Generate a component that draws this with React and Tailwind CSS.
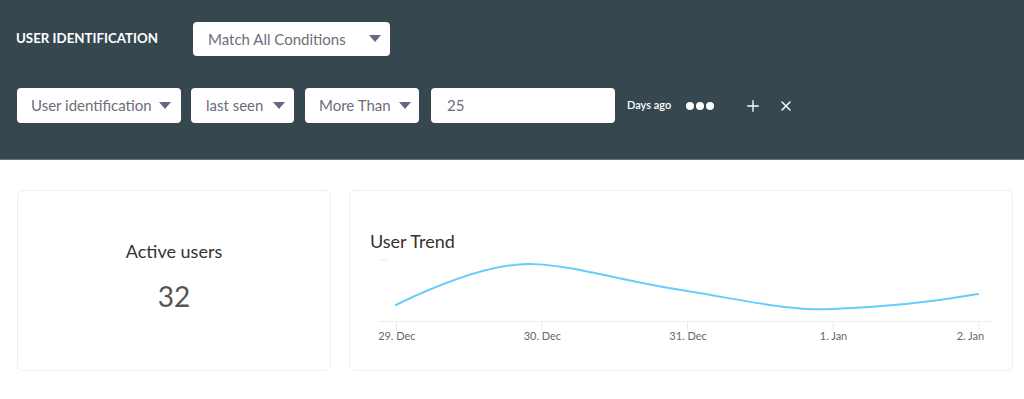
import React from "react";
import { Plus, X } from "lucide-react";

const Caret = () => (
  <svg width="12" height="8" viewBox="0 0 12 8" className="shrink-0">
    <path d="M0 0 L12 0 L6 7 Z" fill="#6c6481" />
  </svg>
);

const Select = ({ label, className, pad = "px-[14px]" }) => (
  <div
    className={`h-[35px] bg-white rounded-[4px] flex items-center justify-between ${pad} text-[15px] text-[#6f6c7b] ${className}`}
  >
    <span>{label}</span>
    <Caret />
  </div>
);

const ticks = [
  { x: 46, label: "29. Dec" },
  { x: 192, label: "30. Dec" },
  { x: 338, label: "31. Dec" },
  { x: 484, label: "1. Jan" },
  { x: 630, label: "2. Jan" },
];

const TrendChart = () => (
  <svg viewBox="0 0 664 100" className="block w-full h-[100px]">
    <line x1="29" y1="5" x2="37" y2="5" stroke="#e6e6e6" strokeWidth="1" />
    <line x1="28" y1="66.5" x2="644" y2="66.5" stroke="#ececec" strokeWidth="1" />
    {ticks.map((t) => (
      <line key={t.x} x1={t.x + 0.5} y1="66" x2={t.x + 0.5} y2="76" stroke="#ececec" strokeWidth="1" />
    ))}
    <path
      d="M46,50 C100,24 148,7 185,9 C228,11 272,26 338,36 C400,46 440,56 484,54 C540,52 590,46 630,39"
      fill="none"
      stroke="#66ccfd"
      strokeWidth="2"
      strokeLinecap="round"
    />
    {ticks.map((t, i) => (
      <text
        key={t.label}
        x={i === ticks.length - 1 ? 636 : t.x + 1}
        y="85"
        textAnchor={i === ticks.length - 1 ? "end" : "middle"}
        fontSize="11"
        fill="#666666"
        fontFamily="Lato, 'Liberation Sans', sans-serif"
      >
        {t.label}
      </text>
    ))}
  </svg>
);

export default function App() {
  return (
    <div className="w-[1024px] h-[399px] bg-white font-['Lato','Liberation_Sans',sans-serif]">
      {/* Filter header */}
      <div className="bg-[#37474f] border-b border-[#66767e] h-[160px] pl-4 pt-[22px]">
        <div className="flex items-center">
          <h1 className="w-[177px] text-white font-bold text-[13.3px]">
            USER IDENTIFICATION
          </h1>
          <div className="w-[197px] h-[34px] bg-white rounded-[4px] flex items-center justify-between pl-[15px] pr-[9px] text-[15px] text-[#6f6c7b]">
            <span>Match All Conditions</span>
            <Caret />
          </div>
        </div>

        <div className="flex items-center mt-[32px] pl-px">
          <Select label="User identification" className="w-[164px]" pad="pl-[14px] pr-[10px]" />
          <Select label="last seen" className="w-[103px] ml-[10px]" pad="pl-[15px] pr-[9px]" />
          <Select label="More Than" className="w-[114px] ml-[11px]" pad="pl-[14px] pr-[8px]" />
          <div className="w-[184px] h-[35px] ml-[12px] bg-white rounded-[4px] flex items-center pl-[16px] text-[15px] text-[#6f6c7b]">
            25
          </div>
          <span className="ml-[12px] text-white text-[11px] font-semibold">Days ago</span>
          <div className="ml-[15px] flex items-center gap-[2px]">
            <span className="w-[8px] h-[8px] rounded-full bg-white" />
            <span className="w-[8px] h-[8px] rounded-full bg-white" />
            <span className="w-[8px] h-[8px] rounded-full bg-white" />
          </div>
          <Plus className="ml-[30px] w-[18px] h-[18px] text-white" strokeWidth={1.8} />
          <X className="ml-[16px] w-[16px] h-[16px] text-white" strokeWidth={2} />
        </div>
      </div>

      {/* Cards */}
      <div className="flex gap-[18px] pl-[17px] pt-[30px]">
        <div className="w-[314px] h-[181px] border border-[#efefef] rounded-[6px] flex flex-col items-center pt-[47px]">
          <div className="text-[18px] text-[#333333]">Active users</div>
          <div className="text-[28px] text-[#555555] mt-[13px] leading-[36px]">32</div>
        </div>
        <div className="w-[664px] h-[181px] border border-[#efefef] rounded-[6px] pt-[38px]">
          <div className="pl-[20px] text-[18px] text-[#333333] leading-[24px]">User Trend</div>
          <div className="mt-[2px]">
            <TrendChart />
          </div>
        </div>
      </div>
    </div>
  );
}
